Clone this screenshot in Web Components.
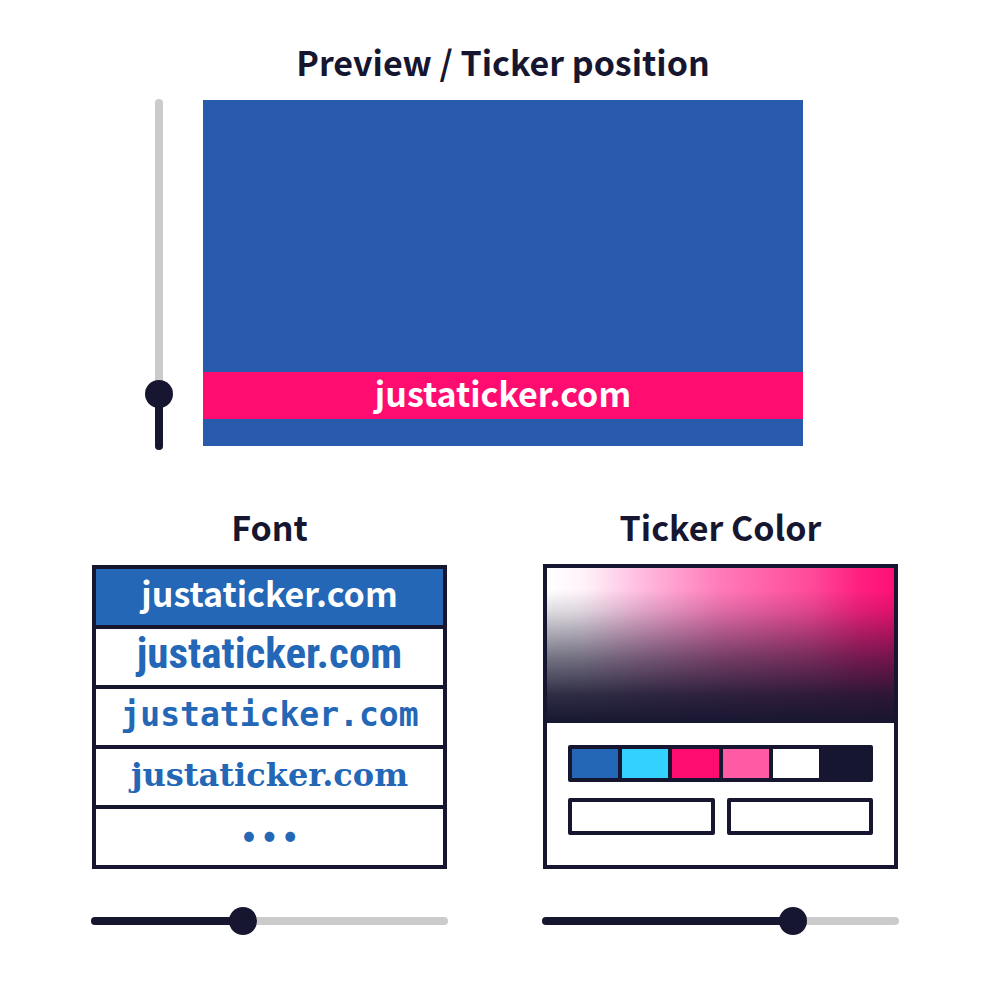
<!DOCTYPE html>
<html lang="en">
<head>
<meta charset="utf-8">
<title>Ticker settings</title>
<style>
  :root {
    --ink: #171630;
    --blue: #2367b6;
    --screen: #295bad;
    --pink: #ff0c71;
    --rail: #cbcbcb;
    --ui: "Noto Sans CJK JP", "Noto Sans", sans-serif;
  }
  body { margin: 0; background: #fff; color: var(--ink); font-family: var(--ui); }
</style>
</head>
<body>
<ticker-settings>
  <ticker-preview slot="preview" heading="Preview / Ticker position">justaticker.com</ticker-preview>
  <ticker-panel heading="Font">
    <font-list>
      <font-option face="sans" selected>justaticker.com</font-option>
      <font-option face="narrow">justaticker.com</font-option>
      <font-option face="mono">justaticker.com</font-option>
      <font-option face="serif">justaticker.com</font-option>
      <font-option face="more">• • •</font-option>
    </font-list>
    <range-slider slot="slider" label="Font size" value="42"></range-slider>
  </ticker-panel>
  <ticker-panel heading="Ticker Color">
    <color-picker></color-picker>
    <range-slider slot="slider" label="Color strength" value="72"></range-slider>
  </ticker-panel>
</ticker-settings>

<script>
const define = (name, markup, setup) => {
  const template = document.createElement("template");
  template.innerHTML = `<style>*{box-sizing:border-box}h2{margin:0;padding-bottom:4px;font-size:34px;line-height:48px;font-weight:700;text-align:center}</style>` + markup;
  customElements.define(name, class extends HTMLElement {
    connectedCallback() {
      if (this.shadowRoot) return;
      this.attachShadow({ mode: "open" }).append(template.content.cloneNode(true));
      if (setup) setup(this, this.shadowRoot);
    }
  });
};

define("ticker-settings", `
  <style>
    :host { display: block; padding: 38px 10.1% 0 9.1%; }
    .panels { display: grid; grid-template-columns: 1fr 1fr; gap: 94px; margin-top: 53px; }
  </style>
  <main>
    <slot name="preview"></slot>
    <div class="panels"><slot></slot></div>
  </main>`);

define("ticker-preview", `
  <style>
    :host { display: block; padding: 0 96px 0 54px; }
    section { display: grid; grid-template-columns: 28px 1fr; column-gap: 30px; row-gap: 10px; }
    h2 { grid-column: 2; }
    .slider { margin-top: -1px; display: grid; }
    .screen { aspect-ratio: 600 / 346; margin-bottom: 4px; background: var(--screen);
      display: flex; flex-direction: column; justify-content: flex-end; padding-bottom: 27px; }
    .ticker { height: 47px; line-height: 41px; background: var(--pink); color: #fff;
      font-size: 34px; font-weight: 700; text-align: center; }
  </style>
  <section>
    <h2></h2>
    <div class="slider"><range-slider vertical label="Ticker position" value="13"></range-slider></div>
    <div class="screen"><div class="ticker"><slot></slot></div></div>
  </section>`,
  (host, root) => { root.querySelector("h2").textContent = host.getAttribute("heading"); });

define("ticker-panel", `
  <style>
    :host { display: block; min-width: 0; }
    .body { margin: 9px 1px 38px; height: 305px; display: flex; flex-direction: column; justify-content: flex-end; }
  </style>
  <section>
    <h2></h2>
    <div class="body"><slot></slot></div>
    <slot name="slider"></slot>
  </section>`,
  (host, root) => { root.querySelector("h2").textContent = host.getAttribute("heading"); });

define("font-list", `
  <style>
    :host { display: block; border: 4px solid var(--ink); background: var(--ink); }
    div { display: grid; gap: 4px; }
  </style>
  <div role="group" aria-label="Font"><slot></slot></div>`);

define("font-option", `
  <style>
    :host { display: block; }
    button { display: flex; justify-content: center; align-items: center; width: 100%; height: 56px;
      border: 0; padding: 0 0 8px; background: #fff; color: var(--blue); font: 700 34px/48px var(--ui); white-space: nowrap; }
    :host([selected]) button { background: var(--blue); color: #fff; }
    :host([face="narrow"]) button { font: 700 43px/48px "Roboto Condensed", Roboto, sans-serif; }
    :host([face="mono"]) button { font: 700 33px/48px "DejaVu Sans Mono", monospace; padding-bottom: 4px; }
    :host([face="serif"]) button { font: 700 32px/48px "DejaVu Serif", serif; padding-bottom: 4px; }
  </style>
  <button type="button"><slot></slot></button>`,
  (host, root) => root.querySelector("button").setAttribute("aria-pressed", host.hasAttribute("selected")));

define("color-picker", `
  <style>
    :host { display: block; border: 4px solid var(--ink); }
    .field { height: 155px;
      background: linear-gradient(to bottom, #17163000 14%, #17163026 28%, #17163099 58%, #171630e6 82%, #171630 100%),
        linear-gradient(to right, #fff 0%, #fff4fa 10%, #ffb9de 28%, #ff7ab9 50%, #ff4a9a 76%, #ff1f80 90%, #ff1076 100%); }
    .controls { display: grid; gap: 16px; padding: 22px 21px 30px; }
    .swatches { display: grid; grid-template-columns: repeat(6, 1fr); gap: 4px; height: 37px;
      padding: 4px; background: var(--ink); border-radius: 2px; }
    button { border: 0; padding: 0; }
    .values { display: grid; grid-template-columns: 1fr 1fr; gap: 12px; }
    input { width: 100%; min-width: 0; height: 37px; border: 4px solid var(--ink); border-radius: 2px; background: #fff; padding: 0 8px; outline: 0; }
  </style>
  <div class="field"></div>
  <div class="controls">
    <div class="swatches">
      <button type="button" aria-label="Blue" style="background:#2367b6"></button>
      <button type="button" aria-label="Sky" style="background:#33d1ff"></button>
      <button type="button" aria-label="Pink" style="background:#ff0c71"></button>
      <button type="button" aria-label="Light pink" style="background:#ff5ba5"></button>
      <button type="button" aria-label="White" style="background:#fff"></button>
      <button type="button" aria-label="Ink" style="background:#171630"></button>
    </div>
    <div class="values">
      <input type="text" aria-label="Color value">
      <input type="text" aria-label="Opacity value">
    </div>
  </div>`);

define("range-slider", `
  <style>
    :host { display: grid; }
    .rail, input { grid-area: 1 / 1; }
    .rail { align-self: center; height: 8px; border-radius: 4px; overflow: hidden; background: var(--rail); display: flex; }
    .fill { width: calc(14px + (100% - 28px) * var(--part)); background: var(--ink); }
    input { appearance: none; width: 100%; height: 28px; margin: 0; background: none; position: relative; }
    input::-webkit-slider-thumb { appearance: none; width: 28px; height: 28px; border-radius: 50%; background: var(--ink); }
    :host([vertical]) .rail { align-self: stretch; justify-self: center; width: 8px; height: auto; flex-direction: column; justify-content: flex-end; }
    :host([vertical]) .fill { width: auto; height: calc(14px + (100% - 28px) * var(--part)); }
    :host([vertical]) input { writing-mode: vertical-lr; direction: rtl; width: 28px; height: 100%; }
  </style>
  <div class="rail"><div class="fill"></div></div>
  <input type="range" min="0" max="100">`,
  (host, root) => {
    const input = root.querySelector("input");
    const paint = () => host.style.setProperty("--part", input.value / 100);
    input.setAttribute("aria-label", host.getAttribute("label"));
    input.value = host.getAttribute("value");
    input.addEventListener("input", paint);
    paint();
  });
</script>
</body>
</html>
